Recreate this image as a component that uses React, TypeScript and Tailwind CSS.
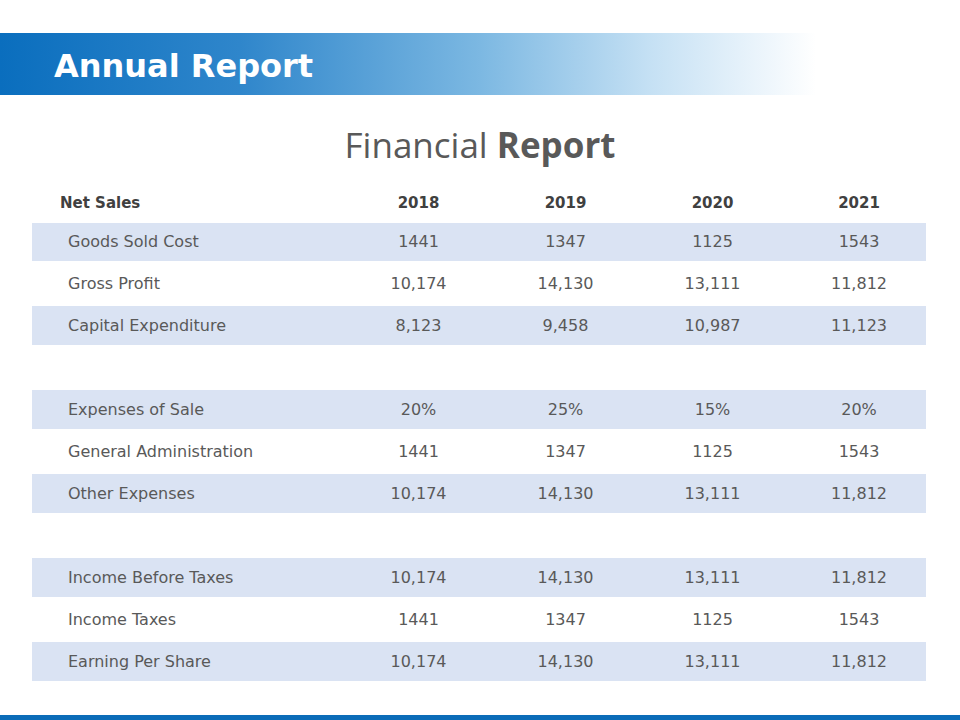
import React from 'react';

type Row = { label: string; values: string[] } | null;

const years = ['2018', '2019', '2020', '2021'];

// null = empty spacer row between groups
const rows: Row[] = [
  { label: 'Goods Sold Cost', values: ['1441', '1347', '1125', '1543'] },
  { label: 'Gross Profit', values: ['10,174', '14,130', '13,111', '11,812'] },
  { label: 'Capital Expenditure', values: ['8,123', '9,458', '10,987', '11,123'] },
  null,
  { label: 'Expenses of Sale', values: ['20%', '25%', '15%', '20%'] },
  { label: 'General Administration', values: ['1441', '1347', '1125', '1543'] },
  { label: 'Other Expenses', values: ['10,174', '14,130', '13,111', '11,812'] },
  null,
  { label: 'Income Before Taxes', values: ['10,174', '14,130', '13,111', '11,812'] },
  { label: 'Income Taxes', values: ['1441', '1347', '1125', '1543'] },
  { label: 'Earning Per Share', values: ['10,174', '14,130', '13,111', '11,812'] },
];

const gridCols = 'grid grid-cols-[313px_147px_147px_147px_140px]';

export default function App() {
  let shade = true;

  return (
    <div className="w-[960px] h-[720px] bg-white flex flex-col overflow-hidden font-['DejaVu_Sans',Verdana,sans-serif]">
      {/* header band */}
      <div className="mt-[33px] h-[62px] flex items-center bg-[linear-gradient(to_right,#0a6ebe_0%,#2f86cb_25%,#7cb8e2_50%,#c6e1f4_68%,#eef6fc_80%,#ffffff_85%)]">
        <h1 className="pl-[54px] pt-[4px] text-[32px] leading-none font-bold text-white">Annual Report</h1>
      </div>

      <div className="mt-[28px] h-[44px] flex items-center justify-center font-['Open_Sans',sans-serif] text-[35px] text-[#595959]">
        <span>
          Financial <span className="font-bold">Report</span>
        </span>
      </div>

      <div className="mt-[16px] mx-[32px] w-[894px]">
        <div className={`${gridCols} h-[40px] items-center text-[15px] font-bold text-[#404040]`}>
          <div className="pl-[28px]">Net Sales</div>
          {years.map((y, i) => (
            <div key={y} className={i === 3 ? 'text-center pl-[6px]' : 'text-center'}>
              {y}
            </div>
          ))}
        </div>

        {rows.map((row, idx) => {
          if (!row) {
            shade = true;
            return <div key={idx} className="h-[45px]" />;
          }
          const banded = shade;
          shade = !shade;
          const height = banded ? (idx === 0 ? 'h-[38px]' : 'h-[39px]') : 'h-[45px]';
          return (
            <div
              key={idx}
              className={`${gridCols} ${height} items-center text-[16px] text-[#595959] ${
                banded ? 'bg-[#dae3f3]' : ''
              }`}
            >
              <div className="pl-[36px]">{row.label}</div>
              {row.values.map((v, i) => (
                <div key={i} className={i === 3 ? 'text-center pl-[6px]' : 'text-center'}>
                  {v}
                </div>
              ))}
            </div>
          );
        })}
      </div>

      <div className="mt-auto h-[5px] bg-[#0b6cb8]" />
    </div>
  );
}
